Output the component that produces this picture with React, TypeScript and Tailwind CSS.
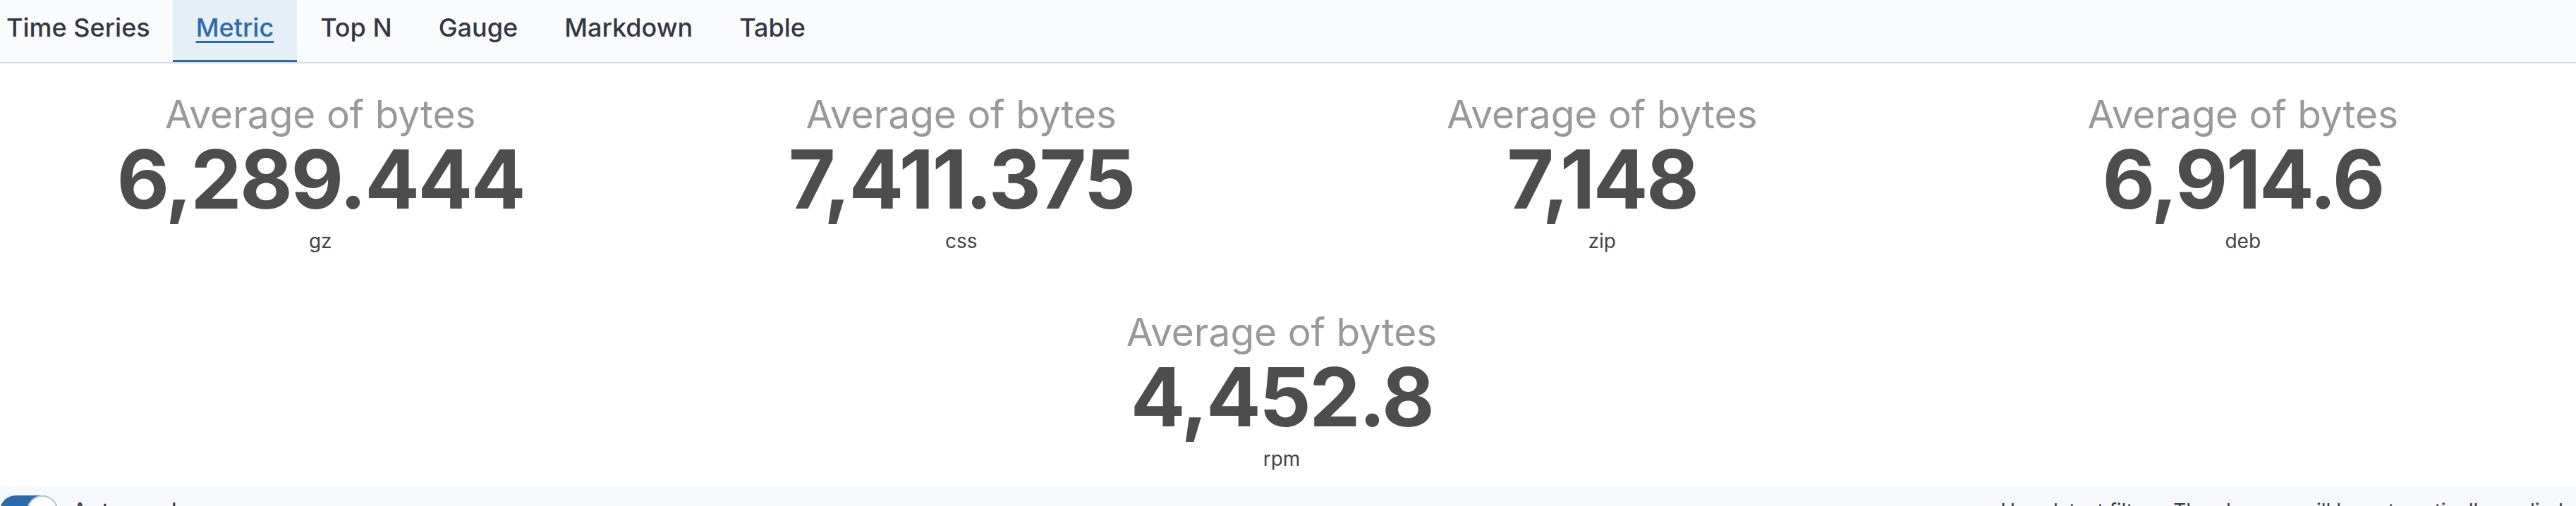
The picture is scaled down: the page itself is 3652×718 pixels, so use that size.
import React from "react";

const tabs = ["Time Series", "Metric", "Top N", "Gauge", "Markdown", "Table"];

const metrics = [
  { value: "6,289.444", label: "gz" },
  { value: "7,411.375", label: "css" },
  { value: "7,148", label: "zip" },
  { value: "6,914.6", label: "deb" },
  { value: "4,452.8", label: "rpm" },
];

const font = { fontFamily: "Inter, 'Noto Sans', sans-serif" };

export default function App() {
  return (
    <div className="w-[3652px] h-[718px] overflow-hidden bg-white" style={font}>
      {/* Visualization type tabs */}
      <div className="flex h-[90px] bg-[#fafbfd] border-b-2 border-[#d3dae6] pl-[9px]">
        {tabs.map((tab, i) => {
          const active = tab === "Metric";
          return (
            <div
              key={tab}
              className={`flex items-center h-[88px] pb-[10px] text-[36px] font-medium ${
                i === 0 ? "pr-[32px]" : "px-[33px]"
              } ${
                active
                  ? "bg-[#e6eef7] text-[#2b6aaf] border-b-[3px] border-[#2b6aaf] pt-[3px]"
                  : "text-[#343741]"
              }`}
            >
              <span className={active ? "underline underline-offset-[6px] decoration-[3px]" : ""}>
                {tab}
              </span>
            </div>
          );
        })}
      </div>

      {/* Metrics */}
      <div className="h-[600px] pr-[18px] pt-[38px]">
        <div className="flex flex-wrap justify-center gap-y-[78px]">
          {metrics.map((m) => (
            <div key={m.label} className="w-1/4 flex flex-col items-center">
              <div className="text-[55px] leading-[68px] text-[#999999]">Average of bytes</div>
              <div className="text-[115px] leading-[117px] font-bold tracking-[-2.5px] text-[#4d4d4d]">
                {m.value}
              </div>
              <div className="mt-[12px] text-[28px] leading-[34px] text-[#444444]">{m.label}</div>
            </div>
          ))}
        </div>
      </div>

      {/* Bottom bar */}
      <div className="h-[28px] bg-[#f7f8fb] flex items-start pt-[13px] pr-[18px]">
        <div className="flex items-start">
          <div className="relative w-[82px] h-[44px] rounded-full bg-[#2b6aaf]">
            <div className="absolute right-0 top-0 w-[44px] h-[44px] rounded-full bg-white border-2 border-[#c3c8d0]" />
          </div>
          <span className="ml-[20px] mt-[2px] text-[33px] leading-[40px] text-[#343741]">Auto apply</span>
        </div>
        <span className="ml-auto mt-[4px] text-[28px] leading-[36px] text-[#343741]">
          Uses latest filters. The changes will be automatically applied
        </span>
      </div>
    </div>
  );
}
